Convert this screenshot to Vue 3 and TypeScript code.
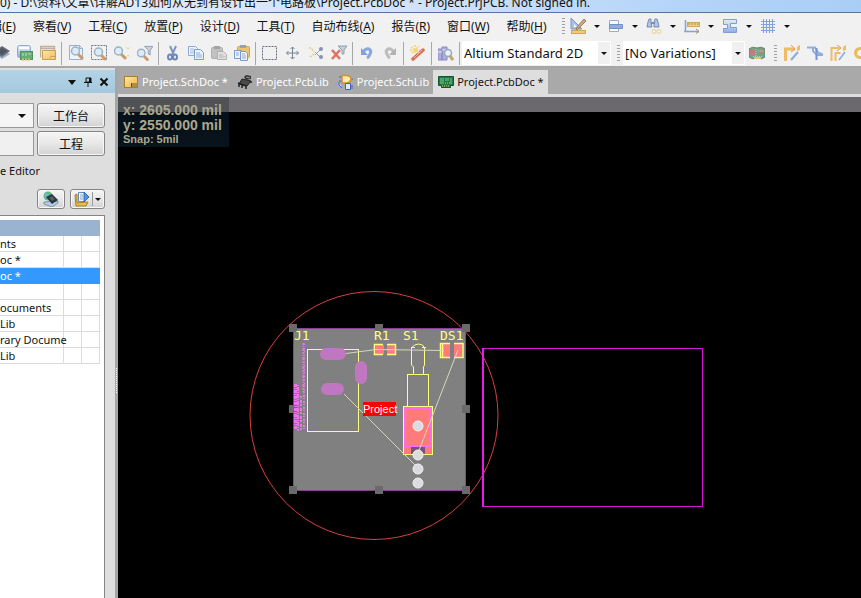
<script setup lang="ts">
import { ref } from 'vue'

interface MenuEntry { label: string; key: string }
interface DocTab { icon: string; label: string }
interface Point { x: number; y: number }

const menus: MenuEntry[] = [
  { label: '辑', key: 'E' },
  { label: '察看', key: 'V' },
  { label: '工程', key: 'C' },
  { label: '放置', key: 'P' },
  { label: '设计', key: 'D' },
  { label: '工具', key: 'T' },
  { label: '自动布线', key: 'A' },
  { label: '报告', key: 'R' },
  { label: '窗口', key: 'W' },
  { label: '帮助', key: 'H' },
]
const dropTools = ['draw', 'align', 'find', 'dimension', 'room', 'grid']
const toolGroups: string[][] = [
  ['layers', 'board', 'sheets'],
  ['zoomdoc', 'zoomarea', 'zoomsel', 'zoomfilter'],
  ['cut', 'copy', 'paste', 'clips'],
  ['select', 'move', 'deselect', 'clear'],
  ['undo', 'redo'],
  ['wand'],
  ['browse'],
]
const routeTools = ['route', 'diff', 'multi', 'pad']
const tabs: DocTab[] = [
  { icon: 'sch', label: 'Project.SchDoc *' },
  { icon: 'chip', label: 'Project.PcbLib' },
  { icon: 'schlib', label: 'Project.SchLib' },
  { icon: 'pcb', label: 'Project.PcbDoc *' },
]
const activeTab = ref(3)
const rows = ['nts', 'oc *', 'oc *', '', 'ocuments', 'Lib', 'rary Docume', 'Lib']
const activeRow = ref(2)
const view = ref('Altium Standard 2D')
const variant = ref('[No Variations]')

const handles: Point[] = [
  { x: 289, y: 324 }, { x: 375, y: 324 }, { x: 462, y: 324 },
  { x: 289, y: 405 }, { x: 462, y: 405 },
  { x: 289, y: 486 }, { x: 375, y: 486 }, { x: 462, y: 486 },
]
const vias: Point[] = [{ x: 418, y: 426 }, { x: 418, y: 455 }, { x: 418, y: 469 }, { x: 418, y: 483 }]
</script>

<template>
  <svg class="defs" aria-hidden="true">
    <defs>
      <linearGradient id="blue" x1="0" y1="0" x2="0" y2="1"><stop offset="0" stop-color="#e4eefb" /><stop offset="1" stop-color="#7fa3dc" /></linearGradient>
      <linearGradient id="gold" x1="0" y1="0" x2="1" y2="1"><stop offset="0" stop-color="#ffe9a0" /><stop offset="1" stop-color="#f0b040" /></linearGradient>
      <g id="lens"><path d="M9 10l4 4" stroke="#c98a50" stroke-width="3" stroke-linecap="round" /><circle cx="6.500" cy="7" r="4" fill="#d9ecf8" stroke="#8fa5bd" stroke-width="1.500" /></g>
    </defs>
    <symbol id="i-layers" viewBox="0 0 16 16"><path d="M0 9l8 5 8-5-8-5z" fill="#8aa6c4" /><path d="M0 7l8 5 8-6-8-5z" fill="#4c5462" /><path d="M3 7l5-4 5 3-5 4z" fill="#323a46" /></symbol>
    <symbol id="i-board" viewBox="0 0 16 16"><rect x=".5" y=".5" width="13" height="12" rx="2" fill="url(#blue)" stroke="#7f9cc4" /><path d="M2 3h10" stroke="#fff" stroke-width="2" /><rect x="3.500" y="6.500" width="12" height="8" fill="#4da35f" stroke="#34804a" /><path d="M6 8v3M9 8v3M11 9h3" stroke="#b9deb0" /><path d="M5 14.500h8" stroke="#d3ad48" stroke-width="2" stroke-dasharray="2 1" /></symbol>
    <symbol id="i-sheets" viewBox="0 0 16 16"><path d="M.5 12.500v-11h14V5M.5 3.500h14" fill="none" stroke="#b8a687" stroke-width="1.500" /><path d="M2.500 5.500h13v9h-13z" fill="url(#gold)" stroke="#c59138" /><path d="M11 14.500v-3h4" fill="#fff2c0" stroke="#c59138" /></symbol>
    <symbol id="i-zoomdoc" viewBox="0 0 16 16"><path d="M1.500.5h10l3 3v11h-13z" fill="#edf4fd" stroke="#8ba4c7" /><path d="M11.500.5v3h3" fill="none" stroke="#8ba4c7" /><use href="#lens" transform="translate(1 -1)" /></symbol>
    <symbol id="i-zoomarea" viewBox="0 0 16 16"><rect x=".5" y=".5" width="15" height="14" fill="none" stroke="#59616f" stroke-dasharray="2 1" /><use href="#lens" transform="translate(1 0)" /></symbol>
    <symbol id="i-zoomsel" viewBox="0 0 16 16"><use href="#lens" transform="translate(-2 -1)" /><path d="M12 2l2 2 2-2M12 12l2-2 2 2" fill="none" stroke="#e5d67a" /></symbol>
    <symbol id="i-zoomfilter" viewBox="0 0 17 16"><use href="#lens" transform="translate(-2 1)" /><path d="M8 1h9l-3 4v5l-2-1V5z" fill="#c3cfdf" stroke="#7e8fa7" /></symbol>
    <symbol id="i-cut" viewBox="0 0 16 16"><path d="M5 1l4 9M11 1L7 10" stroke="#6e86ae" stroke-width="2" /><ellipse cx="5" cy="12" rx="2" ry="2.500" fill="none" stroke="#5475b8" stroke-width="2" /><ellipse cx="10" cy="12" rx="2" ry="2.500" fill="none" stroke="#5475b8" stroke-width="2" /></symbol>
    <symbol id="i-copy" viewBox="0 0 16 16"><path d="M.5 1.500h7l2 2v7h-9z" fill="#f5f9ff" stroke="#7b9bd3" /><path d="M2 4h4M2 6h4M2 8h4" stroke="#8dabde" /><path d="M6.500 4.500h6l3 3v7h-9z" fill="#edf4ff" stroke="#668bcb" /><path d="M8 8h4M8 10h6M8 12h6" stroke="#7f9fd8" /></symbol>
    <symbol id="i-paste" viewBox="0 0 16 16"><rect x=".5" y="2.500" width="11" height="11" rx="1" fill="#b9b9b9" stroke="#a5a5a5" /><rect x="3" y="1" width="6" height="3" fill="#989898" /><path d="M6.500 6.500h6l3 3v5h-9z" fill="#dedede" stroke="#a6a6a6" /><path d="M8 10h4M8 12h6" stroke="#aaa" /></symbol>
    <symbol id="i-clips" viewBox="0 0 16 16"><rect x="3.500" y="1.500" width="12" height="11" rx="1" fill="#edbd55" stroke="#c8963b" /><rect x="6" y="0" width="6" height="3" fill="#8a94a5" /><path d="M.5 5.500h7v8h-7z" fill="#edf4ff" stroke="#668bcb" /><path d="M6.500 6.500h5l2 2v7h-7z" fill="#edf4ff" stroke="#668bcb" /><path d="M2 8h3M2 10h3M8 9h3M8 11h4M8 13h4" stroke="#7f9fd8" /></symbol>
    <symbol id="i-select" viewBox="0 0 16 16"><rect x=".5" y="1.500" width="14" height="13" fill="none" stroke="#4f5969" stroke-dasharray="2 1" /></symbol>
    <symbol id="i-move" viewBox="0 0 16 16"><path d="M7.500 2v12M1.500 8h12M5.500 4l2-2 2 2M5.500 12l2 2 2-2M3.500 6l-2 2 2 2M11.500 6l2 2-2 2" fill="none" stroke="#647084" /></symbol>
    <symbol id="i-deselect" viewBox="0 0 16 16"><path d="M1 3h2l3 4M2 12l4-3" fill="none" stroke="#dccb75" stroke-width="1.500" stroke-dasharray="2 1" /><path d="M7 7l5 5M7 10l5-5" fill="none" stroke="#8491a7" /><circle cx="13" cy="4" r="2" fill="#7184a4" /><circle cx="13" cy="12" r="2" fill="#7184a4" /></symbol>
    <symbol id="i-clear" viewBox="0 0 16 16"><path d="M7 1h9l-3 4v4h-2V5z" fill="#bdcbdc" stroke="#7e8fa7" /><path d="M1 5l8 9M9 5l-8 9" stroke="#df5b4c" stroke-width="2.500" /></symbol>
    <symbol id="i-undo" viewBox="0 0 16 16"><path d="M4 7q3-4 6-3 3 2 1 5-1 3-3 4" fill="none" stroke="#7799db" stroke-width="3" /><path d="M2 3v7h7z" fill="#6d91d8" /></symbol>
    <symbol id="i-redo" viewBox="0 0 16 16"><path d="M12 7Q9 3 6 4 3 6 5 9q1 3 3 4" fill="none" stroke="#b4b4b4" stroke-width="3" /><path d="M14 3v7H7z" fill="#a8a8a8" /></symbol>
    <symbol id="i-wand" viewBox="0 0 16 16"><path d="M3 14l10-9" stroke="#d95a41" stroke-width="3.500" stroke-linecap="round" /><path d="M4 13l8-8" stroke="#f6a48d" /><path d="M5 0v9M1 2l8 6M0 5h10M2 8l7-7" stroke="#f4ce58" stroke-width="1.500" stroke-dasharray="2 1" /></symbol>
    <symbol id="i-browse" viewBox="0 0 16 16"><path d="M0 4h4v11H0zM4 2h5v13H4z" fill="#a5a2dd" stroke="#7876b5" /><path d="M0 7h4M4 5h5M1 2h2" stroke="#e0e0fa" /><path d="M12 11l3 4" stroke="#c39a4e" stroke-width="3" /><circle cx="10" cy="8" r="3.500" fill="#e5f5fa" stroke="#899bb3" stroke-width="1.500" /></symbol>
    <symbol id="i-draw" viewBox="0 0 16 16"><path d="M1 0v11h11z" fill="#9db9e8" stroke="#6385c7" /><path d="M4 6v3h3z" fill="#fff" /><path d="M7 9l7-8 2 2-8 8-2 1z" fill="#c99c68" stroke="#8d6943" /><rect x="1.500" y="12.500" width="14" height="3" fill="#f5c55b" stroke="#d29a35" /></symbol>
    <symbol id="i-align" viewBox="0 0 16 16"><path d="M1.500 2.500h9v11h-9z" fill="#fff" stroke="#8aa1c4" /><path d="M1.500 6.500h13v4h-13z" fill="#82a2da" stroke="#5c80c2" /></symbol>
    <symbol id="i-find" viewBox="0 0 16 16"><path d="M3 1h2v3l1 5H1l1-5zM9 1h2l1 3 1 5H8V4z" fill="#a6bde5" stroke="#607ca9" /><path d="M5 5h4" stroke="#607ca9" stroke-width="2" /><circle cx="8" cy="13.500" r="2" fill="none" stroke="#e4d270" /><circle cx="13" cy="13.500" r="2" fill="none" stroke="#e4d270" /></symbol>
    <symbol id="i-dimension" viewBox="0 0 16 16"><path d="M1.500 2v12M0 13.500h15" stroke="#7696cc" stroke-width="1.500" /><rect x="3.500" y="4.500" width="12" height="4" fill="#f3c966" stroke="#ce9c45" /><path d="M5 5v2M8 5v2M11 5v2M14 5v2M12 11l3 2.500-3 2" stroke="#a37e37" fill="none" /></symbol>
    <symbol id="i-room" viewBox="0 0 16 16"><path d="M1.500 1.500h13v4h-6v4h6v5h-13v-4h4v-4h-4z" fill="url(#blue)" stroke="#6c91cd" /></symbol>
    <symbol id="i-grid" viewBox="0 0 16 16"><path d="M3.500 1v14M6.500 1v14M9.500 1v14M12.500 1v14M1 3.500h14M1 6.500h14M1 9.500h14M1 12.500h14" stroke="#7393d2" /></symbol>
    <symbol id="i-variant" viewBox="0 0 16 16"><path d="M0 4q3-3 8-1 5-2 8 1v8q-3 3-8 1-5 2-8-1z" fill="#5e9675" stroke="#48745b" /><path d="M1 5h5v5H1zM10 4h5v4h-5z" fill="#c46367" /><path d="M7 4v7M9 6h5M4 11.500h9" stroke="#a9d5a3" stroke-dasharray="1 1" /><path d="M5 13h7" stroke="#d8be61" stroke-width="2" /></symbol>
    <symbol id="i-route" viewBox="0 0 16 16"><path d="M1.500 16V4h9" fill="none" stroke="#edb34c" stroke-width="3" /><path d="M7 0l4 4-4 3" fill="none" stroke="#d68d39" /><path d="M7 15l7-8" stroke="#7ba0de" stroke-width="2" /><path d="M16 0q-4 1-3 6l3-1z" fill="#eeb54d" /></symbol>
    <symbol id="i-diff" viewBox="0 0 16 16"><path d="M0 2.500h8l3 5 5 2M6 3v3l4 4h6" fill="none" stroke="#82a3de" stroke-width="2" /><path d="M9.500 3v12" stroke="#6287cb" stroke-width="2" /></symbol>
    <symbol id="i-multi" viewBox="0 0 16 16"><path d="M1.500 16V3h8M5.500 16V8h5" fill="none" stroke="#edb34c" stroke-width="2" /><path d="M7 0l4 3-4 3" fill="none" stroke="#d68d39" /><path d="M9 15l6-8" fill="none" stroke="#7ba0de" stroke-width="1.500" /><path d="M16 0q-4 1-3 6l3-1z" fill="#eeb54d" /></symbol>
    <symbol id="i-pad" viewBox="0 0 16 16"><circle cx="7" cy="8" r="4.500" fill="none" stroke="#edaf3e" stroke-width="3" /></symbol>
    <symbol id="i-sch" viewBox="0 0 16 16"><rect x="1.500" y="2.500" width="13" height="11" fill="url(#gold)" stroke="#a57f2c" /><path d="M8 9h6v4H8z" fill="#5e4c20" /><path d="M9 10h5M9 12h5" stroke="#f5d66c" /></symbol>
    <symbol id="i-chip" viewBox="0 0 16 16"><path d="M5 5l9 2-4 5-8-2z" fill="#4a4a4a" stroke="#222" /><path d="M7 3l2-2 5 1v3l-5 1z" fill="#333" /><path d="M9 3l4 1" stroke="#999" /><path d="M1 9l8 3M2 10v3M5 11v3M9 12v3M14 7v2" stroke="#222" stroke-width="1.500" /></symbol>
    <symbol id="i-schlib" viewBox="0 0 16 16"><path d="M1 3h4M1 7h4M12 5h3M7 12h8M7 14h8" stroke="#3d65b8" /><path d="M4 1.500h5q4 1 4 3.500t-4 4H4z" fill="#ffedb1" stroke="#d9902c" stroke-width="1.500" /><path d="M1 8v3l3 3M7.500 9.500h5v6h-5z" fill="#dfe9ff" stroke="#3d65b8" /></symbol>
    <symbol id="i-pcb" viewBox="0 0 16 16"><path d="M.5 2.500h15v9h-3v2h-9v-2h-3z" fill="#207a48" stroke="#115333" /><path d="M3 4v6M5 4v6M8 4v3M10 4v3M13 4v6" stroke="#7acb81" /><path d="M7 9h5M4 12h8" stroke="#d7c455" stroke-dasharray="1 1" /></symbol>
    <symbol id="i-compile" viewBox="0 0 16 16"><circle cx="5" cy="5" r="4.500" fill="#61ba77" /><path d="M1 2l5 1-3 5z" fill="#72b4e4" /><path d="M1 11v2l8 3 6-4v-2z" fill="#b5cee4" stroke="#7791ab" /><path d="M3 6l6-3 6 6-6 4z" fill="#29343f" /><path d="M6 7l3-2 3 3-3 2z" fill="#52606c" /></symbol>
    <symbol id="i-open" viewBox="0 0 16 16"><path d="M1 4l2-1v9l11-1-2 4H2z" fill="#efbd45" stroke="#ae7d23" /><path d="M4.500 1.500h6v9h-6z" fill="#f7fbff" stroke="#658bc0" /><path d="M6 4h3M6 6h3M6 8h3" stroke="#81a1ca" /><path d="M10 1l5 5-5 5z" fill="#5292df" stroke="#316db9" /></symbol>
  </svg>

  <div class="app">
    <header class="title">0) - D:\资料\文章\详解AD13如何从无到有设计出一个电路板\Project.PcbDoc * - Project.PrjPCB. Not signed in.</header>

    <nav class="menubar" aria-label="Menu">
      <button v-for="m in menus" :key="m.key" class="menu" type="button">{{ m.label }}(<u>{{ m.key }}</u>)</button>
      <span class="grip"></span>
      <button v-for="d in dropTools" :key="d" class="drop-tool" type="button" :aria-label="d">
        <svg class="icon"><use :href="'#i-' + d" /></svg><span class="caret"></span>
      </button>
    </nav>

    <div class="toolbar">
      <div v-for="(group, i) in toolGroups" :key="i" class="group">
        <button v-for="t in group" :key="t" class="tool" type="button" :aria-label="t"><svg class="icon"><use :href="'#i-' + t" /></svg></button>
      </div>
      <label class="combo wide">
        <select v-model="view" aria-label="View configuration"><option>Altium Standard 2D</option></select>
        <span class="combo-arrow"><span class="caret"></span></span>
      </label>
      <span class="grip"></span>
      <label class="combo">
        <select v-model="variant" aria-label="Variant"><option>[No Variations]</option></select>
        <span class="combo-arrow"><span class="caret"></span></span>
      </label>
      <button class="tool" type="button" aria-label="variant"><svg class="icon"><use href="#i-variant" /></svg></button>
      <span class="grip"></span>
      <button v-for="t in routeTools" :key="t" class="tool" type="button" :aria-label="t"><svg class="icon"><use :href="'#i-' + t" /></svg></button>
    </div>

    <div class="work">
      <aside class="panel">
        <div class="panel-head">
          <button type="button" aria-label="menu"><svg viewBox="0 0 10 10"><path d="M1 3h8L5 8z" fill="#111" /></svg></button>
          <button type="button" aria-label="pin"><svg viewBox="0 0 10 10"><path d="M3 1h5v4H3zM1 5.500h8M5 6v4" fill="none" stroke="#111" /><path d="M6 1h2v4H6z" fill="#111" /></svg></button>
          <button type="button" aria-label="close"><svg viewBox="0 0 10 10"><path d="M1.500 1.500l7 7M8.500 1.500l-7 7" stroke="#111" stroke-width="2" /></svg></button>
        </div>
        <div class="panel-form">
          <label class="field">
            <select aria-label="Workspace"><option></option></select>
            <span class="field-arrow"><span class="caret big"></span></span>
          </label>
          <button class="push" type="button">工作台</button>
          <input class="field" type="text" aria-label="Project" />
          <button class="push" type="button">工程</button>
        </div>
        <div class="editor">e Editor</div>
        <div class="panel-tools">
          <button class="push small" type="button" aria-label="compile"><svg class="icon"><use href="#i-compile" /></svg></button>
          <button class="push split" type="button" aria-label="open"><svg class="icon"><use href="#i-open" /></svg><i></i><span class="caret"></span></button>
        </div>
        <div class="list">
          <table>
            <colgroup><col /><col class="mark" /><col class="mark" /></colgroup>
            <thead><tr><th colspan="3"></th></tr></thead>
            <tbody>
              <tr v-for="(r, i) in rows" :key="i" :class="{ on: i === activeRow }" @click="activeRow = i">
                <td>{{ r }}</td><td></td><td></td>
              </tr>
            </tbody>
          </table>
        </div>
      </aside>
      <div class="splitter"></div>

      <main class="main">
        <div class="tabs" role="tablist">
          <button v-for="(t, i) in tabs" :key="t.label" class="tab" :class="{ active: i === activeTab }" type="button" role="tab" :aria-selected="i === activeTab" @click="activeTab = i">
            <svg class="icon"><use :href="'#i-' + t.icon" /></svg><span>{{ t.label }}</span>
          </button>
        </div>
        <div class="canvas">
          <svg class="drawing">
            <!-- Board geometry, shifted so the origin is the window corner -->
            <g transform="translate(-118 -97)" fill="none">
              <rect x="293" y="328" width="173" height="162" fill="#808080" />
              <rect x="293.500" y="328.500" width="172" height="162" stroke="#8b3f94" />
              <circle cx="374" cy="415.500" r="124" stroke="#d8403c" />
              <path d="M483 348.500H702.500V506.500H483" stroke="#d816d8" /><path d="M483 348v159" stroke="#e81ce8" stroke-width="2" />
              <g fill="#6a6a6c"><rect v-for="(h, i) in handles" :key="i" :x="h.x" :y="h.y" width="8" height="8" /></g>

              <g stroke="#e878e8">
                <path d="M303.500 343v50" stroke-width="2" stroke-dasharray="2 1 1 1 3 1" />
                <path d="M304.500 344v48" stroke-dasharray="1 3 1 2" />
                <path d="M295.500 384v46" stroke-width="3" stroke-dasharray="3 1 1 1" />
                <path d="M298 385v46" stroke-width="2" stroke-dasharray="1 1 4 1" />
                <path d="M301 396v34" stroke-width="2" stroke-dasharray="2 2 3 1" />
                <path d="M304 392v38" stroke-width="2" stroke-dasharray="1 2 2 1" />
              </g>
              <rect x="307.500" y="349.500" width="51" height="82" stroke="#ffff80" />
              <g fill="#bf78bf"><rect x="320" y="348" width="26" height="12" rx="6" /><rect x="321" y="383" width="23" height="12" rx="6" /><rect x="355" y="361" width="12" height="23" rx="6" /></g>

              <path d="M376 345h8v9h-8zM387 345h8v9h-8z" fill="#ff7a7a" />
              <path d="M383 344.500h-8.500v10h8.500M387 344.500h8.500v10h-8.500" stroke="#ffff80" stroke-width="1.500" />
              <path d="M442 344h8v13h-8zM454 344h8v13h-8z" fill="#ff7a7a" />
              <path d="M450 343.500h-9.500v14h9.500M454 343.500h9v14h-9M442.500 344v13" stroke="#ffff80" stroke-width="1.500" />

              <path d="M413.500 374v-7l-2-2v-17l3-3q4-2 8 0l2 3v17l-1 2v7M411 347.500h4M422 347.500h4" stroke="#ffff80" />
              <rect x="407.500" y="374.500" width="21" height="32" stroke="#ffff80" />
              <rect x="404" y="407" width="28" height="47" fill="#ff7a7a" />
              <rect x="405" y="408" width="26" height="38" stroke="#ff6af0" stroke-width="2" />
              <rect x="411" y="447" width="14" height="7" fill="#76527c" />
              <rect x="403.500" y="406.500" width="29" height="48" stroke="#ffff80" />

              <path d="M346 353.500l30-4 68 1M344 394l74 74M458 350l-40 103" stroke="#d5d8bd" />
              <g fill="#dcdce0" stroke="#f3f3f3"><circle v-for="v in vias" :key="v.y" :cx="v.x" :cy="v.y" r="5" /></g>
              <g class="designators" fill="#ffff80"><text x="294" y="340">J1</text><text x="374" y="340">R1</text><text x="403" y="340">S1</text><text x="440" y="340">DS1</text></g>
              <rect x="363" y="402" width="33" height="14" fill="#f00" />
              <text class="net" x="363" y="413" fill="#fff">Project</text>
            </g>
          </svg>
          <div class="hud">
            <div>x:  2605.000  mil</div>
            <div>y:  2550.000  mil</div>
            <div class="snap">Snap: 5mil</div>
          </div>
        </div>
      </main>
    </div>
  </div>
</template>

<style>
body { margin: 0; }
</style>

<style scoped>
* { box-sizing: border-box; }
.defs { position: absolute; width: 0; height: 0; }
.app { display: flex; flex-direction: column; height: 100vh; overflow: hidden; font: 12px "Noto Sans", "Noto Sans CJK SC", sans-serif; color: #111; background: #f0f0f0; }
button { font: inherit; color: inherit; padding: 0; margin: 0; border: 0; background: none; white-space: nowrap; }
.icon { width: 16px; height: 16px; flex: none; display: block; }
.title { display: flex; align-items: center; flex: none; height: 13px; padding-bottom: 8px; white-space: pre; background: linear-gradient(90deg, #e4edf9 0, #d4e4f7 45%, #b5d5f8 78%, #a9cef5); border-bottom: 1px solid #54749e; }
.menubar { display: flex; align-items: center; flex: none; height: 27px; padding-bottom: 1px; margin-left: -10px; background: #f1f1f1; }
.menu { margin-right: 17px; }
.menu u { text-underline-offset: 2px; }
.grip { flex: none; width: 3px; height: 17px; background: repeating-linear-gradient(#a0a0a0 0 1px, transparent 1px 3px); }
.menubar .grip { margin: 0 5px 0 -2px; }
.drop-tool { display: flex; align-items: center; gap: 8px; width: 38px; flex: none; }
.caret { flex: none; width: 0; height: 0; border: 3px solid transparent; border-top-color: #111; border-bottom: 0; }
.caret.big { border-width: 4px 4px 0; }
.toolbar { display: flex; align-items: center; flex: none; height: 26px; margin-left: -10px; background: #f1f1f1; }
.menubar .icon, .toolbar .icon { opacity: .85; }
.group { display: flex; }
.group::after { content: ""; width: 1px; height: 23px; margin: 0 2px; background: #a7a7a7; }
.tool { display: flex; align-items: center; justify-content: center; width: 23px; height: 23px; flex: none; }
.combo { position: relative; width: 122px; flex: none; }
.combo.wide { width: 149px; }
.combo select { width: 100%; height: 24px; padding: 0 14px 0 2px; border: 0; background: #fff; appearance: none; font: 13px "Noto Sans", sans-serif; color: #111; }
.combo-arrow { position: absolute; right: 1px; top: 1px; bottom: 1px; width: 12px; display: flex; align-items: center; justify-content: center; background: #f0f0f0; pointer-events: none; }
.toolbar > .grip { margin: 0 3px 0 6px; }

.work { display: flex; flex: 1; min-height: 0; border-top: 2px solid #a6a6a6; }
.panel { display: flex; flex-direction: column; width: 115px; flex: none; padding-top: 2px; background: #dedede; }
.panel-head { display: flex; align-items: center; justify-content: flex-end; gap: 6px; height: 23px; flex: none; padding-right: 6px; background: linear-gradient(#b4d4e6, #a3c8dd); }
.panel-head svg { display: block; width: 10px; height: 10px; }
.panel-form { display: grid; grid-template-columns: 34px 68px; gap: 3px; padding-top: 10px; }
.field { position: relative; width: 100%; height: 25px; border: 1px solid #999; border-left: 0; background: #f0f0f0; padding: 0; }
.field select { display: block; width: 100%; height: 23px; border: 0; background: #f5f5f5; appearance: none; }
.field-arrow { position: absolute; right: 7px; top: 0; bottom: 0; display: flex; align-items: center; pointer-events: none; }
.push { height: 25px; border: 1px solid #858585; border-radius: 3px; background: linear-gradient(#f5f5f5, #e8e8e8 50%, #d2d2d2); box-shadow: inset 0 0 0 1px #f7f7f7; }
.editor { height: 33px; line-height: 30px; font-size: 11px; }
.panel-tools { display: flex; gap: 5px; padding-left: 37px; }
.push.small, .push.split { display: flex; align-items: center; justify-content: center; width: 28px; height: 20px; }
.push.split { width: 35px; gap: 2px; }
.push i { width: 1px; height: 14px; background: #999; }
.list { flex: 1; min-height: 0; margin: 6px 10px 0 0; padding: 4px 4px 0 0; background: #fff; border: 1px solid #858585; border-width: 1px 1px 0 0; }
table { width: 100%; table-layout: fixed; border-collapse: separate; border-spacing: 0; font-size: 11px; }
.mark { width: 18px; }
th { height: 16px; padding: 0; background: #99b3d1; }
td { height: 16px; padding: 0; line-height: 15px; border: 1px solid #dcdcdc; border-width: 0 1px 1px 0; white-space: nowrap; }
tr.on td { background: #3399ff; border-color: #3399ff; color: #fff; }
.splitter { width: 3px; flex: none; background: repeating-linear-gradient(#fff 0 1px, #a6a6a6 1px 2px) 1px 300px / 1px 25px no-repeat, #a6a6a6; }

.main { display: flex; flex-direction: column; flex: 1; min-width: 0; }
.tabs { display: flex; align-items: flex-end; flex: none; height: 29px; padding: 0; background: #a9a9a9; border-bottom: 3px solid #dedede; }
.tab { display: flex; align-items: center; gap: 3px; height: 24px; padding: 0 4px 0 5px; color: #fff; font-size: 11px; }
.tab span { padding-bottom: 1px; }
.tab.active { background: #dedede; color: #111; }
.canvas { position: relative; flex: 1; min-height: 0; background: #000; border-top: 15px solid #6b696e; }
.drawing { position: absolute; left: 0; top: -15px; width: 100%; height: calc(100% + 15px); display: block; }
.designators { font: 13px "DejaVu Sans Mono", monospace; }
.net { font: 11px "Liberation Sans", sans-serif; }
.hud { position: absolute; left: 0; top: -15px; width: 111px; height: 50px; padding: 6px 0 0 5px; background: linear-gradient(#505256 0 15px, #061018 15px, #08131b); color: #aaa891; font: bold 14px/15px "Liberation Sans", sans-serif; white-space: pre; }
.snap { font-size: 11px; line-height: 13px; }
</style>
